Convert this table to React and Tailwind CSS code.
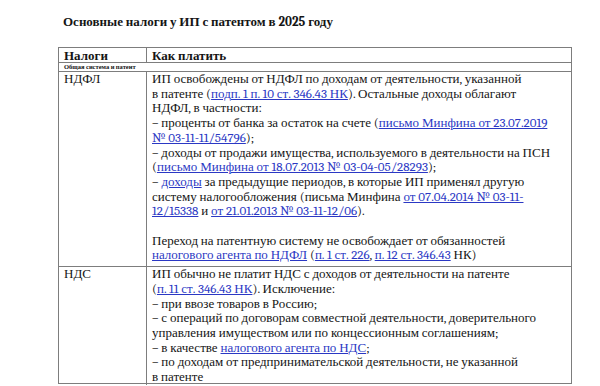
import React from "react";

const L = ({ children }) => (
  <span className="text-[#2b38c4] underline decoration-1 underline-offset-[1px]">{children}</span>
);

export default function App() {
  return (
    <div className="w-[600px] h-[386px] bg-white overflow-hidden text-[#151515] font-serif">
      <div className="pt-[14px] pl-[63px] h-[47px] text-[13px] leading-[16px] font-bold whitespace-nowrap">
        Основные налоги у ИП с патентом в 2025 году
      </div>
      <div className="ml-[58px] w-[514px] border border-[#7d7d7d] text-[13px] leading-[14.7px] whitespace-nowrap">
        <div className="grid grid-cols-[88px_1fr] h-[15px] border-b border-[#7d7d7d] font-bold">
          <div className="pl-[5px] border-r border-[#7d7d7d] leading-[15px]">Налоги</div>
          <div className="pl-[5px] leading-[15px]">Как платить</div>
        </div>
        <div className="h-[9px] border-b border-[#7d7d7d] pl-[5px] text-[6.5px] leading-[9px] font-bold">
          Общая система и патент
        </div>
        <div className="grid grid-cols-[88px_1fr] border-b border-[#7d7d7d]">
          <div className="pl-[5px] border-r border-[#7d7d7d]">НДФЛ</div>
          <div className="pl-[5px] pb-[3px]">
            ИП освобождены от НДФЛ по доходам от деятельности, указанной<br />
            в патенте (<L>подп. 1 п. 10 ст. 346.43 НК</L>). Остальные доходы облагают<br />
            НДФЛ, в частности:<br />
            – проценты от банка за остаток на счете (<L>письмо Минфина от 23.07.2019</L><br />
            <L>№ 03-11-11/54796</L>);<br />
            – доходы от продажи имущества, используемого в деятельности на ПСН<br />
            (<L>письмо Минфина от 18.07.2013 № 03-04-05/28293</L>);<br />
            – <L>доходы</L> за предыдущие периодов, в которые ИП применял другую<br />
            систему налогообложения (письма Минфина <L>от 07.04.2014 № 03-11-</L><br />
            <L>12/15338</L> и <L>от 21.01.2013 № 03-11-12/06</L>).<br />
            <br />
            Переход на патентную систему не освобождает от обязанностей<br />
            <L>налогового агента по НДФЛ</L> (<L>п. 1 ст. 226</L>, <L>п. 12 ст. 346.43</L> НК)
          </div>
        </div>
        <div className="grid grid-cols-[88px_1fr] h-[116px]">
          <div className="pl-[5px] border-r border-[#7d7d7d]">НДС</div>
          <div className="pl-[5px]">
            ИП обычно не платит НДС с доходов от деятельности на патенте<br />
            (<L>п. 11 ст. 346.43 НК</L>). Исключение:<br />
            – при ввозе товаров в Россию;<br />
            – с операций по договорам совместной деятельности, доверительного<br />
            управления имуществом или по концессионным соглашениям;<br />
            – в качестве <L>налогового агента по НДС</L>;<br />
            – по доходам от предпринимательской деятельности, не указанной<br />
            в патенте
          </div>
        </div>
      </div>
    </div>
  );
}
